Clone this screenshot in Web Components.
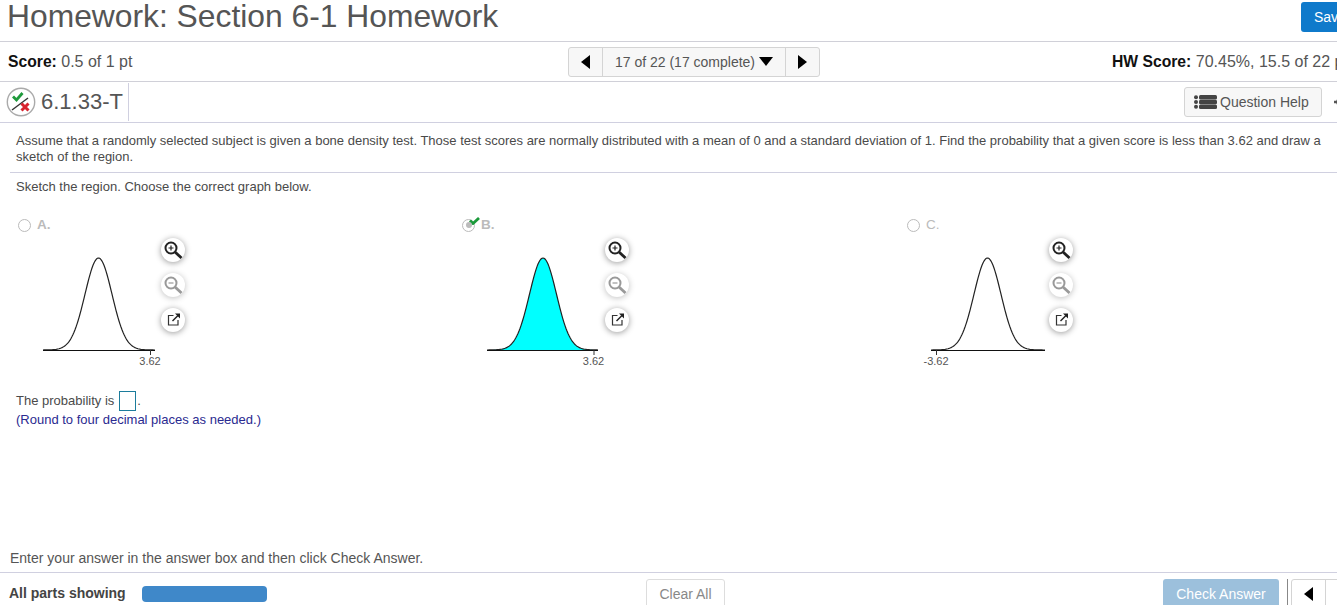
<!DOCTYPE html>
<html lang="en"><head><meta charset="utf-8"><title>Homework</title>
<style>
html,body{margin:0;padding:0;height:605px;width:1337px;overflow:hidden;background:#fff;font-family:"Liberation Sans",Arial,sans-serif;color:#555}
hw-app{display:flex;flex-direction:column;width:1337px;height:605px;overflow:hidden}
</style></head><body>
<hw-app>
  <hw-header></hw-header>
  <hw-score></hw-score>
  <hw-qbar></hw-qbar>
  <hw-question></hw-question>
  <hw-footer></hw-footer>
</hw-app>
<script>
const el=(c,html)=>{customElements.define(c,class extends HTMLElement{constructor(){super();this.attachShadow({mode:'open'}).innerHTML=html;}})};
const tri={
 l:'<svg width="9" height="14" viewBox="0 0 9 14"><path d="M9 0V14L0 7Z" fill="#000"/></svg>',
 r:'<svg width="9" height="14" viewBox="0 0 9 14"><path d="M0 0V14L9 7Z" fill="#000"/></svg>',
 d:'<svg width="14" height="9" viewBox="0 0 14 9"><path d="M0 0H14L7 9Z" fill="#000"/></svg>'};

el('hw-header',`<style>
:host{display:flex;flex:none;height:41px;border-bottom:1px solid #d0d0d8;justify-content:space-between;align-items:flex-start;overflow:hidden}
h1{margin:0 0 0 7px;font-weight:400;font-size:31.800px;line-height:32px;color:#555;white-space:nowrap}
button{all:unset;box-sizing:border-box;flex:none;width:57px;height:30px;margin-top:2px;background:#0f7acb;border-radius:3px 0 0 3px;color:#fff;font-size:14px;line-height:30px;padding-left:13px;white-space:nowrap;margin-right:-21px}
</style><h1>Homework: Section 6-1 Homework</h1><button>Save</button>`);

el('hw-score',`<style>
:host{display:grid;grid-template-columns:568px 252px 1fr;align-items:center;flex:none;height:39px;border-bottom:1px solid #d0d0d8;font-size:16px;color:#555;overflow:hidden}
b{color:#111;font-weight:700;font-size:15.700px}
.l{padding-left:8px;white-space:nowrap}
.r{padding-left:292px;white-space:nowrap}
.nav{display:flex;height:30px;box-sizing:border-box;border:1px solid #d4d4d4;border-radius:3px;background:#f7f7f7;font-size:14px;align-items:stretch}
.nav div{display:flex;align-items:center;justify-content:center}
.a{width:33px;flex:none}.m{flex:1;border:solid #d4d4d4;border-width:0 1px;gap:4px;color:#555}
.nav svg{display:block}
</style><div class="l"><b>Score:</b> 0.5 of 1 pt</div>
<div class="nav"><div class="a">${tri.l}</div><div class="m"><span>17 of 22 (17 complete)</span>${tri.d}</div><div class="a">${tri.r}</div></div>
<div class="r"><b>HW Score:</b> 70.45%, 15.5 of 22 pts</div>`);

el('hw-qbar',`<style>
:host{display:flex;flex:none;height:40px;border-bottom:1px solid #d0d0e0;align-items:center;overflow:hidden}
.ic{margin-left:6px;flex:none;display:block}
.t{margin-left:5px;font-size:22px;color:#555;width:87px;height:38px;line-height:38px;border-right:1px solid #d0d0e0;white-space:nowrap;flex:none}
.sp{flex:1}
.h{flex:none;box-sizing:border-box;width:138px;height:30px;border:1px solid #d4d4d4;border-radius:3px;background:#f7f7f7;display:flex;align-items:center;padding-left:9px;gap:3px;font-size:14px;color:#555}
.g{flex:none;margin-left:12px;margin-right:-13px;display:block}
</style>
<svg class="ic" width="30" height="30" viewBox="0 0 30 30"><circle cx="15" cy="15" r="13.700" fill="#fff" stroke="#aaa" stroke-width="1.400"/><path d="M6 23 22 11" stroke="#333" stroke-width="1.400"/><path d="M7 9.500 10.500 13 16.500 6" fill="none" stroke="#1f9a3c" stroke-width="2.800"/><path d="M15.500 16.500 22.500 23.500M22.500 16.500 15.500 23.500" stroke="#d8232e" stroke-width="3"/></svg>
<div class="t">6.1.33-T</div><div class="sp"></div>
<div class="h"><svg width="23" height="14" viewBox="0 0 23 14"><g fill="#444"><circle cx="2" cy="2.200" r="2"/><circle cx="2" cy="7" r="2"/><circle cx="2" cy="11.800" r="2"/><rect x="5" y="0" width="18" height="4.400" rx="1.500"/><rect x="5" y="4.800" width="18" height="4.400" rx="1.500"/><rect x="5" y="9.600" width="18" height="4.400" rx="1.500"/></g></svg><span>Question Help</span></div>
<svg class="g" width="16" height="16" viewBox="0 0 16 16"><circle cx="8" cy="8" r="4.500" fill="none" stroke="#555" stroke-width="2.500"/><path d="M8 0v3M8 13v3M0 8h3M13 8h3" stroke="#555" stroke-width="2.500"/></svg>`);

el('hw-tools',`<style>
:host{display:flex;flex-direction:column;gap:11px;flex:none;width:24px;margin-left:4px}
span{display:block;width:24px;height:24px;border-radius:50%;background:#fff;box-shadow:0 1px 6px rgba(0,0,0,.4)}
span.off{box-shadow:0 1px 6px rgba(0,0,0,.25)}
svg{display:block}
</style>
<span><svg width="24" height="24" viewBox="0 0 24 24"><circle cx="10" cy="10" r="5.500" fill="none" stroke="#222" stroke-width="2"/><path d="M14 14 20.500 20" stroke="#222" stroke-width="2.800"/><path d="M7.500 10h5M10 7.500v5" stroke="#222" stroke-width="1.200"/></svg></span>
<span class="off"><svg width="24" height="24" viewBox="0 0 24 24"><circle cx="10" cy="10" r="5.500" fill="none" stroke="#999" stroke-width="2"/><path d="M14 14 20.500 20" stroke="#999" stroke-width="2.800"/><path d="M7.500 10h5" stroke="#999" stroke-width="1.200"/></svg></span>
<span><svg width="24" height="24" viewBox="0 0 24 24"><path d="M12.500 7.500H7.500V17H17V12" fill="none" stroke="#333" stroke-width="1.200"/><path d="M11.500 13 17 7.500" stroke="#222" stroke-width="1.500"/><path d="M14 5.500H19V10.500Z" fill="#222"/></svg></span>`);

customElements.define('hw-choice',class extends HTMLElement{constructor(){super();
 const r=this.attachShadow({mode:'open'});
 const L=this.getAttribute('letter'),c=+this.getAttribute('center'),t=+this.getAttribute('tick'),lab=this.getAttribute('label'),sel=this.hasAttribute('selected'),w=+this.getAttribute('axis');
 let pts=[];for(let x=0;x<=w;x+=1){const y=112-92*Math.exp(-Math.pow((x-c)/13.500,2)/2);pts.push(x+' '+y.toFixed(2));}
 const curve='M'+pts.join('L');
 r.innerHTML=`<style>
 :host{display:block}
 .o{display:flex;align-items:center;height:16px;gap:6px;font-size:13.500px;color:#bbb;font-weight:${L==='C'?400:700}}
 .radio{width:13px;height:13px;border:1px solid #bbb;border-radius:50%;box-sizing:border-box;flex:none;margin-left:${this.getAttribute('rx')}px;position:relative;background:#fff}
 .radio.on::after{content:"";position:absolute;left:2.500px;top:2.500px;width:6px;height:6px;border-radius:50%;background:#bbb}
 .ck{position:absolute;left:6px;top:-3px;display:block}
 .g{display:flex;margin-top:5px;margin-left:27px}
 svg.plot{display:block;flex:none;overflow:visible}
 text{font:11px "Liberation Sans",Arial,sans-serif;fill:#555}
 </style>
 <div class="o"><div class="radio ${sel?'on':''}">${sel?'<svg class="ck" width="11" height="8" viewBox="0 0 11 8"><path d="M1 3.500 4 6.500 10 1" fill="none" stroke="#1a9a3a" stroke-width="2.800"/></svg>':''}</div><span>${L}.</span></div>
 <div class="g"><svg class="plot" width="114" height="135" viewBox="0 0 114 135">
 ${sel?`<path d="${curve}Z" fill="#00ffff"/>`:''}
 <path d="${curve}" fill="none" stroke="#222" stroke-width="1.200"/>
 <path d="M0 112.500H${w}" stroke="#111" stroke-width="1"/>
 <path d="M${t+.5} 112V117" stroke="#333" stroke-width="1"/>
 <text x="${t}" y="127" text-anchor="middle">${lab}</text></svg><hw-tools></hw-tools></div>`;
}});

el('hw-question',`<style>
:host{display:block;flex:1;min-height:0;font-size:13px;line-height:16px;color:#4a4a4a;overflow:hidden}
p{margin:0}
.q{padding:10px 16px 7px}
hr{border:0;border-top:1px solid #d0d0e0;margin:0 0 0 10px}
.s{padding:6px 16px 0}
.cols{display:grid;grid-template-columns:444px 444px 444px;padding-left:16px;margin-top:22px}
.a{padding:18px 16px 0;display:flex;align-items:center;height:20px}
.box{display:inline-block;box-sizing:border-box;width:17px;height:20px;border:1px solid #1c7c9c;margin:0 1px 0 5px;background:#fff}
.n{padding:1px 16px 0;color:#2a2a90}
</style>
<p class="q">Assume that a randomly selected subject is given a bone density test. Those test scores are normally distributed with a mean of 0 and a standard deviation of 1. Find the probability that a given score is less than 3.62 and draw a sketch of the region.</p>
<hr>
<p class="s">Sketch the region. Choose the correct graph below.</p>
<div class="cols">
<hw-choice letter="A" center="55.500" tick="107" axis="112" label="3.62" rx="2"></hw-choice>
<hw-choice letter="B" center="56" tick="106.500" axis="111" label="3.62" rx="2" selected></hw-choice>
<hw-choice letter="C" center="56.500" tick="5" axis="114" label="-3.62" rx="3"></hw-choice>
</div>
<div class="a"><span>The probability is</span><span class="box"></span><span>.</span></div>
<p class="n">(Round to four decimal places as needed.)</p>`);

el('hw-footer',`<style>
:host{display:block;flex:none;height:56px;overflow:hidden;color:#555}
.e{font-size:14px;line-height:18px;height:23px;padding-left:10px;box-sizing:border-box}
.bar{display:flex;border-top:1px solid #d0d0e0;height:40px;padding-top:6px;box-sizing:border-box;align-items:flex-start}
.lbl{font-size:14px;font-weight:700;color:#444;margin-left:9px;width:133px;flex:none;line-height:16px;padding-top:6px}
.p{flex:none;width:125px;height:16px;margin-top:7px;border-radius:4px;background:#3f88c9}
.clr{flex:none;margin-left:379px;box-sizing:border-box;width:79px;height:30px;border:1px solid #ddd;border-radius:3px;color:#888;font-size:14px;display:flex;align-items:center;justify-content:center;background:#fff}
.ck{flex:none;margin-left:438px;width:116px;height:30px;background:#9cc0dc;border-radius:3px;color:#fff;font-size:14px;display:flex;align-items:center;justify-content:center}
.v{flex:none;width:1px;height:30px;background:#888;margin-left:8px}
.nb{flex:none;margin-left:3px;box-sizing:border-box;width:60px;height:30px;border:1px solid #d4d4d4;border-radius:3px;background:#fff;display:flex}
.nb div{width:33px;display:flex;align-items:center;justify-content:center;border-right:1px solid #d4d4d4;flex:none}
</style>
<div class="e">Enter your answer in the answer box and then click Check Answer.</div>
<div class="bar"><div class="lbl">All parts showing</div><div class="p"></div><div class="clr">Clear All</div><div class="ck">Check Answer</div><div class="v"></div><div class="nb"><div>${tri.l}</div></div></div>`);
</script>
</body></html>
